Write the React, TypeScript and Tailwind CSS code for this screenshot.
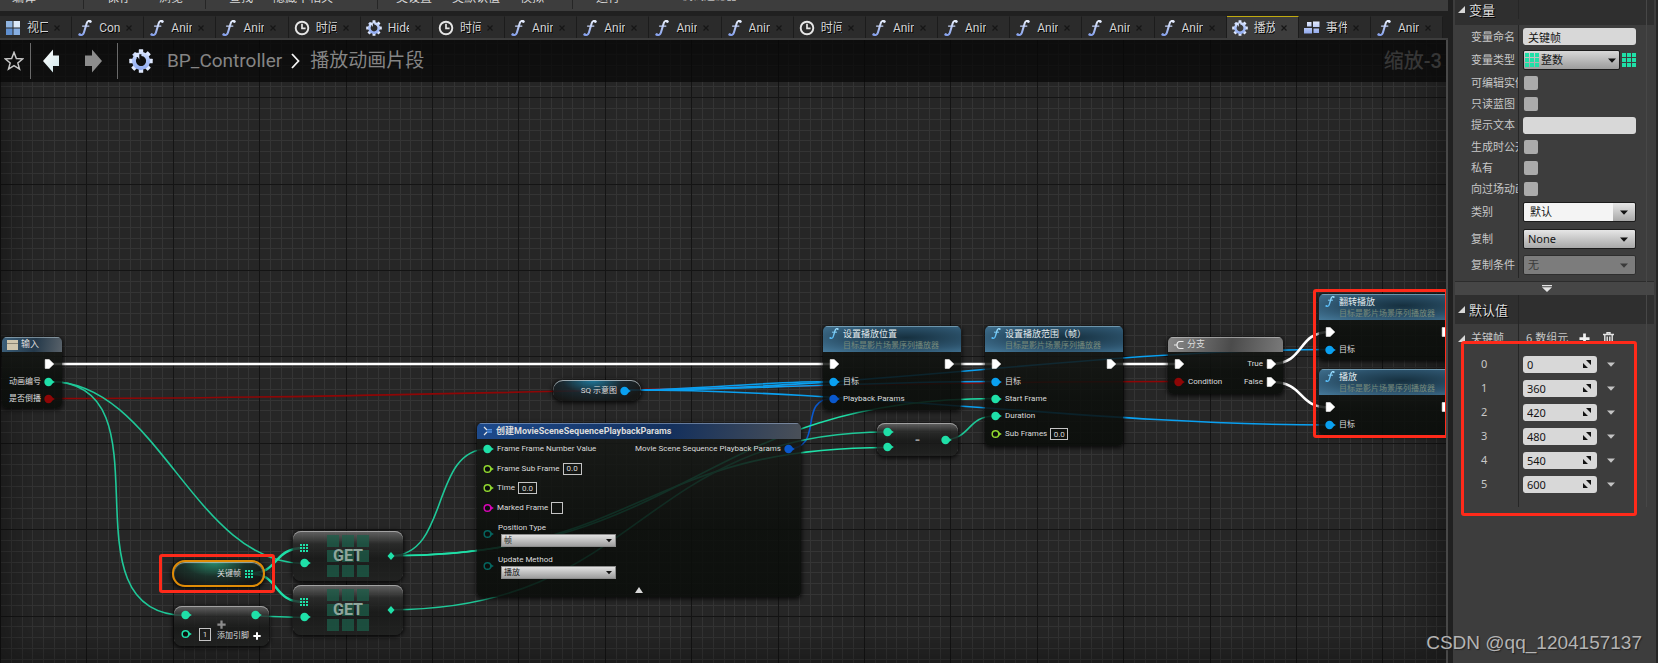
import type { ReactNode } from "react";

const TEAL = "#1fe0a8";
const BLUE = "#0aa0f0";
const NAVY = "#0a58cc";
const LIME = "#8fd62f";
const RED = "#8e0606";
const MAGENTA = "#d506b4";
const DEEP = "#05645e";

/* ---------- icons ---------- */

function Defs() {
  return (
    <svg className="absolute size-0" aria-hidden="true">
      <defs>
        <linearGradient id="ice" gradientUnits="userSpaceOnUse" x1="0" y1="0" x2="0" y2="24">
          <stop offset="0" stopColor="#e6eeff" />
          <stop offset="0.5" stopColor="#a9c0f8" />
          <stop offset="1" stopColor="#86a2ee" />
        </linearGradient>
        <linearGradient id="iceUser" gradientUnits="userSpaceOnUse" x1="0" y1="0" x2="0" y2="16">
          <stop offset="0" stopColor="#eef4ff" />
          <stop offset="1" stopColor="#7f9bea" />
        </linearGradient>
        <linearGradient id="sky" gradientUnits="userSpaceOnUse" x1="0" y1="0" x2="0" y2="16">
          <stop offset="0" stopColor="#9fe0ff" />
          <stop offset="1" stopColor="#4fb4f0" />
        </linearGradient>
        <linearGradient id="arrowLight" x1="0" y1="0" x2="1" y2="1">
          <stop offset="0" stopColor="#ffffff" />
          <stop offset="1" stopColor="#cfe6ea" />
        </linearGradient>
      </defs>
    </svg>
  );
}

function FnIcon({ className, paint = "url(#iceUser)" }: { className: string; paint?: string }) {
  return (
    <svg viewBox="0 0 14 16" className={className} fill="none" stroke={paint} strokeLinecap="round">
      <path d="M12.6 1.6C11 .4 9.400 1 8.700 3.200L5.900 12.600C5.200 14.900 3.300 15.600 1.400 14.600" strokeWidth="2" />
      <path d="M4.600 6.100H10.800" strokeWidth="1.400" />
      <path d="M12.200 1.500h.1M1.800 14.400h.1" strokeWidth="2.400" />
    </svg>
  );
}

function GearIcon({ className }: { className: string }) {
  return (
    <svg viewBox="0 0 24 24" className={className}>
      <g fill="url(#ice)">
        {[0, 45, 90, 135, 180, 225, 270].map((a) => (
          <rect key={a} x="9.800" y="0.300" width="4.400" height="5" rx="0.500" transform={`rotate(${a} 12 12)`} />
        ))}
        <path d="M3.200 5.800L6 3L9 5.500L6.500 9z" />
      </g>
      <path d="M12.500 5A7 7 0 1 1 6.500 7.700" fill="none" stroke="url(#ice)" strokeWidth="3.800" />
      <path d="M5.500 3.800H10.300V10.500L8.800 8L5.800 8.500z" fill="#d9e5ff" />
    </svg>
  );
}

function ClockIcon({ className }: { className: string }) {
  return (
    <svg viewBox="0 0 16 16" className={className} fill="none" stroke="#e6e6e6">
      <circle cx="8" cy="8" r="6.300" strokeWidth="1.900" />
      <path d="M8 3.800V8.400H11.600" strokeWidth="1.700" />
    </svg>
  );
}

function PanesIcon({ className }: { className: string }) {
  return (
    <svg viewBox="0 0 16 16" className={className}>
      <path d="M1 1h6.500v6.500H1z" fill="#8fb4e0" />
      <path d="M8.500 1H15v6.500H8.500z" fill="#dbe9f8" />
      <path d="M1 8.500h6.500V15H1z" fill="#5f8fd0" />
      <path d="M8.500 8.500H15V15H8.500z" fill="#86aee2" />
    </svg>
  );
}

function EventIcon({ className }: { className: string }) {
  return (
    <svg viewBox="0 0 16 16" className={className} fill="url(#iceUser)">
      <path d="M3 2h4.500v4.500H3zM9 1.500h6.500v5.500H9zM0 8h8v5.500H0zM9.500 8.500H15V13H9.500z" />
    </svg>
  );
}

function ArrayGrid({ className }: { className: string }) {
  return (
    <svg viewBox="0 0 14 14" className={className} fill={TEAL}>
      {[0, 5, 10].map((y) => [0, 5, 10].map((x) => <rect key={`${x}-${y}`} x={x} y={y} width="4" height="4" />))}
    </svg>
  );
}

function ArrayPin() {
  return (
    <svg viewBox="0 0 8 8" className="size-2 shrink-0" fill={TEAL}>
      {[0, 3, 6].map((y) => [0, 3, 6].map((x) => <rect key={`${x}-${y}`} x={x} y={y} width="2" height="2" />))}
    </svg>
  );
}

function Plus({ className, color = "#f0f0f0" }: { className: string; color?: string }) {
  return (
    <svg viewBox="0 0 12 12" className={className} fill={color}>
      <path d="M4.500 0.500h3v4h4v3h-4v4h-3v-4h-4v-3h4z" />
    </svg>
  );
}

function Caret({ className, color = "#111" }: { className: string; color?: string }) {
  return (
    <svg viewBox="0 0 8 5" className={className} fill={color}>
      <path d="M0 0.500h8L4 4.800z" />
    </svg>
  );
}

/* ---------- pins ---------- */

function Pin({ color, hollow = false }: { color: string; hollow?: boolean }) {
  return (
    <svg viewBox="0 0 11 10" className="h-2.5 w-[11px] shrink-0">
      <circle cx="4.500" cy="5" r={hollow ? 3.300 : 4.200} fill={hollow ? "#0c0e0c" : color} stroke={hollow ? color : "none"} strokeWidth="1.500" />
      <path d="M8 3.200L10.800 5L8 6.800z" fill={color} />
    </svg>
  );
}

function Exec() {
  return (
    <svg viewBox="0 0 11 10" className="h-2.5 w-[11px] shrink-0">
      <path d="M1.200 0.600H5.200L9.800 5L5.200 9.400H1.200z" fill="#fff" stroke="#fff" strokeLinejoin="round" strokeWidth="0.600" />
    </svg>
  );
}

function Row({ children, className = "h-[17px] px-1.5" }: { children: ReactNode; className?: string }) {
  return <div className={`flex shrink-0 items-center gap-[3px] ${className}`}>{children}</div>;
}

function NumBox({ label, value, className }: { label: string; value: string; className: string }) {
  return (
    <input
      aria-label={label}
      defaultValue={value}
      className={`border border-[#c4c4c4] bg-transparent text-center text-[8px] leading-none text-[#d8d8d8] ${className}`}
    />
  );
}

/* ---------- nodes ---------- */

const BODY =
  "absolute flex flex-col overflow-hidden rounded-[5px] bg-[linear-gradient(180deg,rgba(24,26,23,0.85),rgba(11,14,11,0.86)_60%,rgba(10,13,10,0.88))] shadow-[0_1px_4px_1px_rgba(0,0,0,0.75)]";
const COMPACT =
  "absolute rounded-lg bg-[linear-gradient(180deg,rgba(110,110,110,0.85),rgba(42,43,42,0.8)_26%,rgba(24,25,24,0.82)_55%,rgba(32,33,32,0.85))] shadow-[0_1px_4px_1px_rgba(0,0,0,0.8),inset_0_1px_0_rgba(190,190,190,0.7)]";
const FN_HEAD =
  "flex h-[26px] shrink-0 gap-1 bg-[radial-gradient(ellipse_at_60%_45%,#16303f_0%,#2c526b_55%,#467a9b_100%)] pl-1.5 shadow-[inset_0_1px_0_rgba(150,190,210,0.6)]";

function FnNode({ title, className, children }: { title: string; className: string; children: ReactNode }) {
  return (
    <section className={`${BODY} ${className}`}>
      <header className={FN_HEAD}>
        <FnIcon className="mt-0.5 h-[11px] w-2.5 shrink-0" paint="url(#sky)" />
        <div className="pt-[3px] whitespace-nowrap">
          <h3 className="text-[9px] leading-[11px] text-[#e4ecee]">{title}</h3>
          <p className="text-[8px] leading-[11px] text-[#76897a]">目标是影片场景序列播放器</p>
        </div>
      </header>
      <div className="flex flex-col pt-[3px]">{children}</div>
    </section>
  );
}

function GetNode({ className }: { className: string }) {
  return (
    <section className={`${COMPACT} flex h-[50px] w-[110px] items-center px-[7px] ${className}`}>
      <div className="flex flex-col gap-1.5">
        <ArrayPin />
        <Pin color={TEAL} />
      </div>
      <div className="relative ml-4 flex size-[42px] items-center justify-center">
        <svg viewBox="0 0 42 42" className="absolute inset-0 size-full" fill="#1c5e49" fillOpacity="0.75">
          {[0, 15, 30].map((y) => [0, 15, 30].map((x) => <rect key={`${x}-${y}`} x={x} y={y} width="12" height="12" />))}
        </svg>
        <span className="relative text-base leading-none font-bold text-[#8fa69c]">GET</span>
      </div>
      <svg viewBox="0 0 8 8" className="mr-px ml-auto size-2" fill={TEAL}>
        <path d="M4 0L7.500 4L4 8L0.500 4z" />
      </svg>
    </section>
  );
}

function NodeSelect({ label, value }: { label: string; value: string }) {
  return (
    <label className="flex h-7 shrink-0 items-center gap-[3px] px-1.5">
      <Pin color={DEEP} hollow />
      <span className="flex flex-col">
        <span className="h-3 pl-px text-[8px] leading-[11px]">{label}</span>
        <span className="relative ml-1 block">
          <select className="block h-[13px] w-[115px] appearance-none border border-[#8c8c8c] bg-[linear-gradient(180deg,#e2e2e2,#9e9e9e)] pl-0.5 text-[8px] leading-[11px] text-[#1c1c1c]">
            <option>{value}</option>
          </select>
          <Caret className="pointer-events-none absolute top-1 right-1 h-[5px] w-1.5" />
        </span>
      </span>
    </label>
  );
}

/* ---------- graph drawing ---------- */

const STEP = 10.8;
const vLines = Array.from({ length: 240 }, (_, i) => ({ at: Math.round(i * STEP), major: i % 8 === 0 }));
const hLines = Array.from({ length: 140 }, (_, i) => ({ at: Math.round(57.2 - 8 * STEP + i * STEP), major: i % 8 === 0 }));

function Grid() {
  return (
    <svg className="absolute inset-0 size-full" shapeRendering="crispEdges" aria-hidden="true">
      {[false, true].map((major) => (
        <g key={String(major)} fill={major ? "#141414" : "#343434"}>
          {vLines.filter((l) => l.major === major).map((l) => (
            <rect key={`v${l.at}`} x={l.at} y="0" width="1" height="100%" />
          ))}
          {hLines.filter((l) => l.major === major).map((l) => (
            <rect key={`h${l.at}`} x="0" y={l.at} width="100%" height="1" />
          ))}
        </g>
      ))}
    </svg>
  );
}

const SEA = "#1fc898";
const wires: { d: string; c: string; w: number }[] = [
  { d: "M50 358.500C430 358.500 800 341.500 1178 341.500", c: RED, w: 1.6 },
  { d: "M628 350C700 350 760 341.500 833 341.500", c: BLUE, w: 1.6 },
  { d: "M628 350C750 350 870 341.500 995 341.500", c: BLUE, w: 1.6 },
  { d: "M628 350C860 350 1100 309.500 1330 309.500", c: BLUE, w: 1.6 },
  { d: "M628 350C860 350 1100 385 1330 385", c: BLUE, w: 1.6 },
  { d: "M787 409C826 409 796 358.500 833 358.500", c: NAVY, w: 1.6 },
  { d: "M50 341.500C176 342 56 575.500 186 575.500", c: SEA, w: 1.6 },
  { d: "M50 341.500C158 341.500 194 523.500 304 523.500", c: SEA, w: 1.6 },
  { d: "M250 533.500C280 533.500 272 508 304 508", c: TEAL, w: 2.4 },
  { d: "M250 533.500C280 533.500 272 562 304 562", c: TEAL, w: 2.4 },
  { d: "M255 576L304 577.500", c: SEA, w: 1.6 },
  { d: "M391 515.700C450 515.700 430 409 488 409", c: SEA, w: 1.6 },
  { d: "M391 515.700C690 516 700 358.500 995 358.500", c: TEAL, w: 1.6 },
  { d: "M391 515.700C640 516 640 407.500 887 407.500", c: TEAL, w: 1.6 },
  { d: "M391 569.700C640 570 640 392 887 392", c: SEA, w: 1.6 },
  { d: "M944 399.500C972 399.500 966 376 995 376", c: SEA, w: 1.6 },
  { d: "M50 324H833", c: "#fff", w: 2.6 },
  { d: "M949 324H995", c: "#fff", w: 2.6 },
  { d: "M1110 324H1178", c: "#fff", w: 2.6 },
  { d: "M1271 324C1306 324 1296 292 1330 292", c: "#fff", w: 2.6 },
  { d: "M1271 342C1306 342 1296 367.500 1330 367.500", c: "#fff", w: 2.6 },
];

function Graph() {
  return (
    <main className="relative min-h-0 flex-1 overflow-hidden border-r-2 border-[#484848] bg-[#262626] text-[8px] leading-[10px] text-[#dcdcdc]">
      <Grid />
      <div className="absolute inset-0 shadow-[inset_0_0_36px_8px_rgba(0,0,0,0.4)]" />
      <svg className="absolute inset-0 size-full" fill="none" aria-hidden="true">
        {wires.map((w) => (
          <path key={w.d} d={w.d} stroke={w.c} strokeWidth={w.w} />
        ))}
      </svg>

      <section className={`${BODY} top-[297px] left-[2px] h-[71px] w-[60px]`}>
        <header className="flex h-[15px] shrink-0 items-center gap-[3px] bg-[linear-gradient(100deg,#3d617c,#24394a_55%,#59626a)] pl-[5px] shadow-[inset_0_1px_0_rgba(170,190,200,0.6)]">
          <svg viewBox="0 0 11 10" className="h-2.5 w-[11px]">
            <rect width="11" height="10" fill="#cfc6ae" />
            <path d="M0 3.500h11" stroke="#8a8575" />
          </svg>
          <h3 className="text-[9px] leading-[11px]">输入</h3>
        </header>
        <div className="flex flex-col pt-[3px]">
          <Row className="h-[18px] justify-end pr-[7px]"><Exec /></Row>
          <Row className="h-[17px] justify-end pr-[7px]">动画编号<Pin color={TEAL} /></Row>
          <Row className="h-[17px] justify-end pr-[7px]">是否倒播<Pin color={RED} /></Row>
        </div>
      </section>

      <section className="absolute top-[340px] left-[553px] flex h-[21px] w-[88px] items-center justify-end gap-[3px] rounded-[10px] bg-[radial-gradient(ellipse_at_45%_0%,rgba(30,130,170,0.9),rgba(24,40,48,0.85)_45%,rgba(20,21,20,0.88)_80%)] pr-2.5 shadow-[0_1px_4px_1px_rgba(0,0,0,0.8),inset_0_1px_0_rgba(190,200,205,0.8)]">
        SQ 示意图<Pin color={BLUE} />
      </section>

      <section className={`${BODY} top-[383px] left-[477px] h-[174px] w-[324px]`}>
        <header className="flex h-4 shrink-0 items-center gap-[3px] bg-[linear-gradient(100deg,#1d4a8c,#14305c_60%,#4a5058)] pl-1.5 shadow-[inset_0_1px_0_rgba(150,170,200,0.6)]">
          <svg viewBox="0 0 10 10" className="size-2.5" fill="none">
            <path d="M1 1L4 4M1 9L4 6" stroke="#e8e8e8" strokeWidth="1.200" />
            <path d="M4 3.700h5M4 6h5" stroke="#4f8fe0" strokeWidth="1.600" />
          </svg>
          <h3 className="text-[9px] leading-[11px] font-bold">创建MovieSceneSequencePlaybackParams</h3>
        </header>
        <Row className="h-5 px-1.5">
          <Pin color={TEAL} />Frame Frame Number Value
          <span className="ml-auto">Movie Scene Sequence Playback Params</span>
          <Pin color={NAVY} />
        </Row>
        <Row className="h-[19px] px-1.5"><Pin color={LIME} hollow />Frame Sub Frame<NumBox label="Frame Sub Frame" value="0.0" className="h-3 w-[19px]" /></Row>
        <Row className="h-5 px-1.5"><Pin color={LIME} hollow />Time<NumBox label="Time" value="0.0" className="h-3 w-[19px]" /></Row>
        <Row className="h-5 px-1.5">
          <Pin color={MAGENTA} hollow />
          <label htmlFor="marked">Marked Frame</label>
          <input id="marked" type="checkbox" className="size-3 appearance-none border border-[#c4c4c4]" />
        </Row>
        <div className="flex flex-col gap-1 pt-0.5">
          <NodeSelect label="Position Type" value="帧" />
          <NodeSelect label="Update Method" value="播放" />
        </div>
        <button aria-label="收起" className="mx-auto mt-[7px] block">
          <svg viewBox="0 0 8 6" className="h-1.5 w-2" fill="#d8d8d8"><path d="M4 0L8 6H0z" /></svg>
        </button>
      </section>

      <GetNode className="top-[491px] left-[293px]" />
      <GetNode className="top-[545px] left-[293px]" />

      <section className="absolute top-[520px] left-[172px] flex h-[27px] w-[93px] items-center justify-end gap-1 rounded-[13px] border-2 border-[#e08c06] bg-[radial-gradient(ellipse_at_45%_0%,rgba(40,150,115,0.9),rgba(24,50,42,0.85)_45%,rgba(20,21,20,0.88)_80%)] pr-2.5 shadow-[0_1px_4px_1px_rgba(0,0,0,0.8),inset_0_1px_1px_rgba(190,205,200,0.8)]">
        关键帧<ArrayPin />
      </section>
      <div className="pointer-events-none absolute top-[514px] left-[159px] h-[39px] w-[116px] rounded-[3px] border-[3px] border-[#ff2a1a]" />

      <section className={`${COMPACT} top-[566px] left-[174px] flex h-[40px] w-[95px] flex-col justify-between px-[7px] pt-1 pb-[5px]`}>
        <Plus className="absolute top-[14px] left-[43px] size-[9px]" color="#8c8c8c" />
        <div className="flex justify-between"><Pin color={TEAL} /><Pin color={TEAL} /></div>
        <div className="flex items-center">
          <Pin color={TEAL} hollow />
          <NumBox label="B" value="1" className="ml-[7px] h-[13px] w-3" />
          <button className="ml-1.5 flex items-center gap-1 pt-1 text-[8px] leading-[10px] whitespace-nowrap">添加引脚<Plus className="size-2" color="#fff" /></button>
        </div>
      </section>

      <FnNode title="设置播放位置" className="top-[286px] left-[823px] h-[84px] w-[138px]">
        <Row className="h-[18px] justify-between px-1.5"><Exec /><Exec /></Row>
        <Row><Pin color={BLUE} />目标</Row>
        <Row><Pin color={NAVY} />Playback Params</Row>
      </FnNode>

      <section className={`${COMPACT} top-[383px] left-[877px] flex h-[33px] w-[81px] items-center justify-between px-1.5`}>
        <div className="flex flex-col gap-[5px]"><Pin color={TEAL} /><Pin color={TEAL} /></div>
        <span className="text-sm leading-none font-bold text-[#9a9a9a]">-</span>
        <Pin color={TEAL} />
      </section>

      <FnNode title="设置播放范围（帧）" className="top-[286px] left-[985px] h-[120px] w-[138px]">
        <Row className="h-[18px] justify-between px-1.5"><Exec /><Exec /></Row>
        <Row><Pin color={BLUE} />目标</Row>
        <Row><Pin color={TEAL} />Start Frame</Row>
        <Row><Pin color={TEAL} />Duration</Row>
        <Row className="h-5 px-1.5"><Pin color={LIME} hollow />Sub Frames<NumBox label="Sub Frames" value="0.0" className="h-3 w-[18px]" /></Row>
      </FnNode>

      <section className={`${BODY} top-[297px] left-[1168px] h-[57px] w-[115px]`}>
        <header className="flex h-[15px] shrink-0 items-center gap-[3px] bg-[linear-gradient(100deg,#8a8a8a,#4b4b4b_55%,#7a7a7a)] pl-1.5 shadow-[inset_0_1px_0_rgba(200,200,200,0.6)]">
          <svg viewBox="0 0 10 10" className="size-2.5" fill="none" stroke="#ececec" strokeWidth="1.200">
            <path d="M0 5H3M9.500 1.500H6C3.500 1.500 3 3 3 5S3.500 8.500 6 8.500H9.500" />
          </svg>
          <h3 className="text-[9px] leading-[11px]">分支</h3>
        </header>
        <div className="flex flex-col pt-[3px]">
          <Row className="h-[18px] px-1.5"><Exec /><span className="ml-auto">True</span><Exec /></Row>
          <Row className="h-[18px] px-1.5"><Pin color={RED} />Condition<span className="ml-auto">False</span><Exec /></Row>
        </div>
      </section>

      <FnNode title="翻转播放" className="top-[254px] left-[1319px] h-[66px] w-[139px]">
        <Row className="h-[18px] justify-between px-1.5"><Exec /><Exec /></Row>
        <Row><Pin color={BLUE} />目标</Row>
      </FnNode>
      <FnNode title="播放" className="top-[329px] left-[1319px] h-[66px] w-[139px]">
        <Row className="h-[18px] justify-between px-1.5"><Exec /><Exec /></Row>
        <Row><Pin color={BLUE} />目标</Row>
      </FnNode>

      <nav className="absolute inset-x-0 top-0 flex h-[42px] items-center bg-[rgba(8,8,8,0.75)] text-[19px] text-[#858585]">
        <button aria-label="收藏" className="ml-1">
          <svg viewBox="0 0 22 22" className="size-5" fill="none" stroke="#c8c8c8" strokeWidth="1.600">
            <path d="M11 1.500L13.600 8.200L20.700 8.600L15.200 13.100L17.100 20L11 16.100L4.900 20L6.800 13.100L1.300 8.600L8.400 8.200z" />
          </svg>
        </button>
        <span className="ml-1.5 h-9 w-px bg-[#6a6a6a]" />
        <button aria-label="后退" className="ml-3">
          <svg viewBox="0 0 17 24" className="h-6 w-[17px]" fill="url(#arrowLight)"><path d="M0 12L10 0.500V6.500H16V17H10V23.500z" /></svg>
        </button>
        <button aria-label="前进" className="ml-[25px]">
          <svg viewBox="0 0 17 24" className="h-6 w-[17px]" fill="#8c8c8c"><path d="M17 12L7 0.500V6.500H0V17H7V23.500z" /></svg>
        </button>
        <span className="ml-[15px] h-9 w-px bg-[#6a6a6a]" />
        <GearIcon className="ml-[11px] size-6" />
        <a href="#bp" className="ml-3.5">BP_Controller</a>
        <svg viewBox="0 0 9 16" className="mr-2.5 ml-[9px] h-4 w-[9px]" fill="none" stroke="#f4f4f4" strokeWidth="1.800"><path d="M1 1L7.500 8L1 15" /></svg>
        <a href="#fn">播放动画片段</a>
        <span className="mr-1 ml-auto text-xl font-medium text-[#363636]">缩放-3</span>
      </nav>

      <div className="pointer-events-none absolute top-[249px] right-[-2px] h-[149px] w-[135px] rounded-[3px] border-[3px] border-[#ff2a1a]" />
    </main>
  );
}

/* ---------- top bars ---------- */

function ToolGroup({ className, children }: { className: string; children: ReactNode }) {
  return <div className={`flex h-[9px] shrink-0 ${className}`}>{children}</div>;
}

function Tool({ children }: { children: string }) {
  return <button className="-mt-2 h-[13px] text-xs leading-[13px] whitespace-nowrap text-[#d8d8d8]">{children}</button>;
}

function Toolbar() {
  return (
    <div className="flex h-[11px] shrink-0 overflow-hidden bg-[#3d3d3d]">
      <ToolGroup className="w-[84px] border-r border-[#262626] pl-3"><Tool>编译</Tool></ToolGroup>
      <ToolGroup className="w-[122px] gap-7 border-r border-[#262626] pl-[23px]"><Tool>保存</Tool><Tool>浏览</Tool></ToolGroup>
      <ToolGroup className="w-[172px] gap-5 border-r border-[#262626] pl-[23px]"><Tool>查找</Tool><Tool>隐藏不相关</Tool></ToolGroup>
      <ToolGroup className="w-[195px] gap-5 border-r border-[#262626] pl-[18px]"><Tool>类设置</Tool><Tool>类默认值</Tool><Tool>模拟</Tool></ToolGroup>
      <ToolGroup className="pl-[23px]"><Tool>运行</Tool></ToolGroup>
      <span className="-mt-2 ml-[62px] h-[10px] text-[11px] leading-[10px] text-[#c0c0c0]">调试过滤器</span>
    </div>
  );
}

type Kind = "fn" | "clock" | "gear" | "panes" | "event";
const tabs: [Kind, string][] = [
  ["panes", "视口"], ["fn", "Con"], ["fn", "Anim"], ["fn", "Anim"], ["clock", "时间"],
  ["gear", "Hide"], ["clock", "时间"], ["fn", "Anim"], ["fn", "Anim"], ["fn", "Anim"],
  ["fn", "Anim"], ["clock", "时间"], ["fn", "Anim"], ["fn", "Anim"], ["fn", "Anim"],
  ["fn", "Anim"], ["fn", "Anim"], ["gear", "播放"], ["event", "事件"], ["fn", "Anim"],
];

function TabIcon({ kind }: { kind: Kind }) {
  if (kind === "fn") return <FnIcon className="h-4 w-3.5" />;
  if (kind === "clock") return <ClockIcon className="size-4" />;
  if (kind === "gear") return <GearIcon className="size-4" />;
  if (kind === "panes") return <PanesIcon className="size-4" />;
  return <EventIcon className="size-4" />;
}

function Tabs() {
  return (
    <div className="flex shrink-0 border-b-2 border-[#3d3d3d] bg-[#202020] pt-[5px] pr-[5px]">
      {tabs.map(([kind, text], i) => (
        <button
          key={i}
          className={`flex h-[22px] min-w-0 flex-1 items-center border-t border-r border-r-[#1c1c1c] pl-[5px] ${
            i === 17 ? "border-t-[#c0aa10] bg-[#3d3d3d]" : "border-t-[#2b2b2b] bg-[#2b2b2b]"
          }`}
        >
          <span className="flex w-4 shrink-0 justify-center"><TabIcon kind={kind} /></span>
          <span className="ml-1.5 w-[21px] overflow-hidden text-left text-xs leading-5 whitespace-nowrap text-[#d4d4d4] [text-shadow:1px_1px_0_#000]">{text}</span>
          <svg viewBox="0 0 6 6" className="ml-1.5 size-1.5" stroke="#161616" strokeWidth="1.200"><path d="M0.500 0.500L5.500 5.500M5.500 0.500L0.500 5.500" /></svg>
        </button>
      ))}
    </div>
  );
}

/* ---------- details panel ---------- */

const FIELD = "w-full rounded-[3px] bg-[#d8d8d8] text-[11px] text-[#141414]";

function Detail({ label, id, h, children }: { label: string; id: string; h: string; children: ReactNode }) {
  return (
    <div className={`flex shrink-0 ${h}`}>
      <label htmlFor={id} className="flex w-[66px] shrink-0 items-center overflow-hidden border-r border-[#262626] pl-[18px] whitespace-nowrap">
        <span>{label}</span>
      </label>
      <div className="flex min-w-0 flex-1 items-center pr-5 pl-1">{children}</div>
    </div>
  );
}

function Check({ id }: { id: string }) {
  return <input id={id} type="checkbox" className="ml-px size-3.5 appearance-none rounded-[2px] bg-[#ababab]" />;
}

function Drop({ id, value, kind }: { id: string; value: string; kind: "plain" | "combo" | "off" | "array" }) {
  const look = {
    plain: "bg-[linear-gradient(180deg,#e6e6e6,#a8a8a8)] pl-1 text-[#141414] border-[#1c1c1c]",
    combo: "bg-[linear-gradient(90deg,#f4f4f4_0_89px,transparent_89px),linear-gradient(180deg,#e6e6e6,#a8a8a8)] pl-1.5 text-[#141414] border-[#1c1c1c]",
    off: "bg-[#7c7c7c] pl-1 text-[#3a3a3a] border-[#2e2e2e]",
    array: "bg-[linear-gradient(180deg,#d8d8d8,#9c9c9c)] pl-[17px] text-[#141414] border-[#1c1c1c]",
  }[kind];
  return (
    <div className="relative min-w-0 flex-1">
      <select id={id} disabled={kind === "off"} className={`block h-5 w-full appearance-none rounded-[2px] border text-[11px] opacity-100 ${look}`}>
        <option>{value}</option>
      </select>
      {kind === "array" && <ArrayGrid className="pointer-events-none absolute top-[3px] left-0.5 size-3.5" />}
      <Caret className={`pointer-events-none absolute top-2 ${kind === "array" ? "right-1" : "right-2"} h-[5px] w-2`} color={kind === "off" ? "#3a3a3a" : "#111"} />
    </div>
  );
}

function Head({ title, h }: { title: string; h: string }) {
  return (
    <div className={`mr-0.5 ml-0.5 flex shrink-0 bg-[#2f2f2f] ${h}`}>
      <h2 className="flex w-16 items-center gap-1 border-r border-[#262626] pl-[3px] text-[13px] whitespace-nowrap text-[#dedede] [text-shadow:1px_1px_0_#000]">
        <svg viewBox="0 0 8 8" className="size-[7px] shrink-0" fill="#d8d8d8"><path d="M8 0V8H0z" /></svg>
        {title}
      </h2>
    </div>
  );
}

const keyframes = [0, 360, 420, 480, 540, 600];

function Details() {
  return (
    <aside className="relative flex w-[205px] shrink-0 flex-col border-r-2 border-[#262626] bg-[#3d3d3d] font-['Noto_Sans','Noto_Sans_CJK_SC',sans-serif] text-[11px] leading-4 text-[#c8c8c8]">
      <Head title="变量" h="h-[25px] pb-1.5" />
      <Detail label="变量命名" id="name" h="h-[23px]"><input id="name" defaultValue="关键帧" className={`${FIELD} h-[17px] px-[5px]`} /></Detail>
      <Detail label="变量类型" id="type" h="h-6">
        <Drop id="type" value="整数" kind="array" />
        <button aria-label="容器类型" className="ml-0.5"><ArrayGrid className="size-3.5" /></button>
      </Detail>
      <Detail label="可编辑实例" id="c1" h="h-[21px]"><Check id="c1" /></Detail>
      <Detail label="只读蓝图" id="c2" h="h-[21px]"><Check id="c2" /></Detail>
      <Detail label="提示文本" id="tip" h="h-[22px]"><input id="tip" className={`${FIELD} h-[17px] px-[5px]`} /></Detail>
      <Detail label="生成时公开" id="c3" h="h-[21px]"><Check id="c3" /></Detail>
      <Detail label="私有" id="c4" h="h-[21px]"><Check id="c4" /></Detail>
      <Detail label="向过场动画" id="c5" h="h-[21px]"><Check id="c5" /></Detail>
      <Detail label="类别" id="cat" h="h-[26px]"><Drop id="cat" value="默认" kind="combo" /></Detail>
      <Detail label="复制" id="rep" h="h-[27px]"><Drop id="rep" value="None" kind="plain" /></Detail>
      <Detail label="复制条件" id="cond" h="h-[26px]"><Drop id="cond" value="无" kind="off" /></Detail>
      <button aria-label="展开" className="mx-0.5 mt-[3px] flex h-[14px] shrink-0 items-center justify-center border-t border-[#2c2c2c] bg-[#464646] pr-4 pb-px">
        <svg viewBox="0 0 10 7" className="h-[7px] w-2.5" fill="#e4e4e4"><path d="M0 0h10v1.200H0zM0 2.200h10L5 7z" /></svg>
      </button>
      <Head title="默认值" h="h-[29px]" />

      <div className="flex h-[28px] shrink-0">
        <span className="flex w-[66px] items-center gap-1.5 border-r border-[#262626] pl-[5px]">
          <svg viewBox="0 0 8 8" className="size-[7px] shrink-0" fill="#d8d8d8"><path d="M8 0V8H0z" /></svg>
          关键帧
        </span>
        <span className="flex items-center pl-[7px] whitespace-nowrap">6 数组元</span>
        <button aria-label="添加元素" className="ml-[11px]"><Plus className="size-[11px]" /></button>
        <button aria-label="清空" className="ml-[13px]">
          <svg viewBox="0 0 11 12" className="h-3 w-[11px]" fill="none" stroke="#e4e4e4" strokeWidth="1.400"><path d="M0 2.500H11M4 2V.8H7V2M1.800 3V11.300H9.200V3M4.200 4.500V10M6.800 4.500V10" /></svg>
        </button>
      </div>
      <ul className="shrink-0">
        {keyframes.map((v, i) => (
          <li key={v} className="flex h-6">
            <label htmlFor={`k${i}`} className="flex w-[66px] shrink-0 items-center border-r border-[#262626] pl-2.5">
              <span className="mr-[17px] h-3.5 w-0 border-l border-dotted border-[#808080]" />
              {i}
            </label>
            <span className="relative ml-1 flex w-[74px] items-center">
              <input id={`k${i}`} defaultValue={v} className={`${FIELD} h-[17px] px-1`} />
              <svg viewBox="0 0 8 8" className="pointer-events-none absolute right-1.5 size-2" fill="#111"><path d="M3 0H8V5zM0 3V8H5z" /></svg>
            </span>
            <button aria-label="元素菜单" className="ml-2.5"><Caret className="h-[5px] w-2" color="#c4c4c4" /></button>
          </li>
        ))}
      </ul>
      <span className="h-[11px] w-[66px] shrink-0 border-r border-[#262626]" />
      <div className="pointer-events-none absolute top-0 right-[9px] h-[507px] w-px bg-[#474747]" />
      <div className="pointer-events-none absolute top-[341px] left-2 h-[175px] w-[176px] rounded-[3px] border-[3px] border-[#ff2a1a]" />
    </aside>
  );
}

export default function App() {
  return (
    <div className="relative flex h-screen overflow-hidden bg-[#222] font-[Roboto,'Noto_Sans_CJK_SC',sans-serif]">
      <Defs />
      <div className="flex min-w-0 flex-1 flex-col">
        <Toolbar />
        <Tabs />
        <Graph />
      </div>
      <div className="w-[5px] shrink-0 bg-[#202020]" />
      <Details />
      <p className="pointer-events-none absolute right-4 bottom-2 font-['Liberation_Sans',sans-serif] text-[19px] leading-6 text-[#b4b4b4] [text-shadow:1px_1px_1px_#222]">
        CSDN @qq_1204157137
      </p>
    </div>
  );
}
